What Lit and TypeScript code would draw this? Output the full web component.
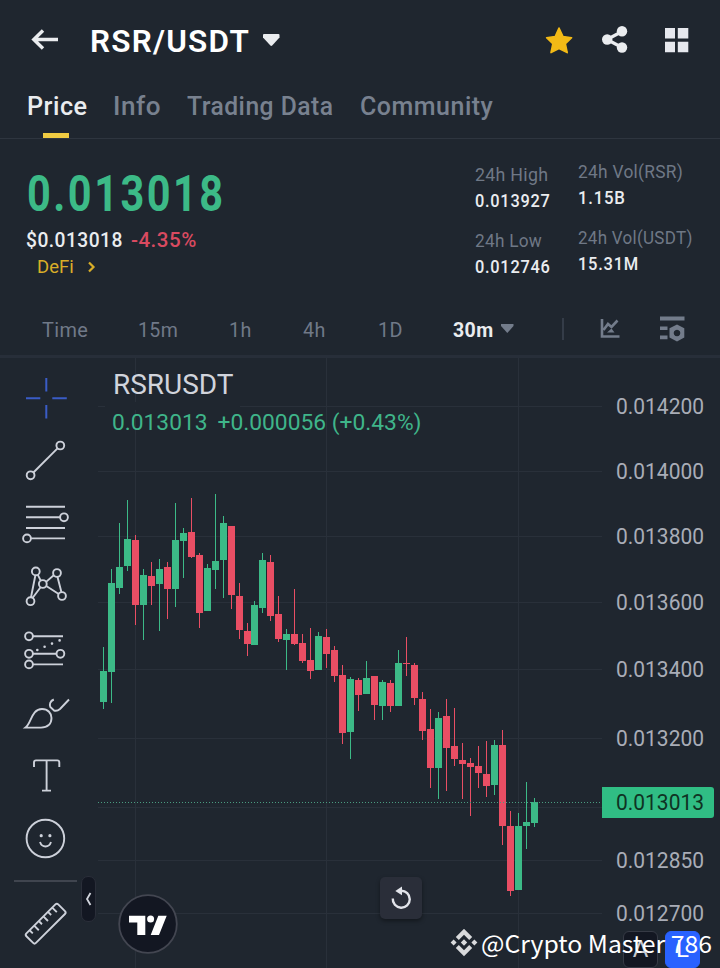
import { LitElement, html, svg, css } from "lit";
import { customElement, property, query } from "lit/decorators.js";

/** Single-line label whose glyphs are condensed or widened to fill a set width. */
@customElement("fit-text")
class FitText extends LitElement {
  @property() text = "";
  @property({ type: Number }) w = 0;
  @query(".t") span!: HTMLElement;

  static styles = css`
    :host { display: block; white-space: nowrap; }
    .t { display: inline-block; transform-origin: 0 50%; }
  `;

  updated() {
    this.style.width = this.w + "px";
    this.fit();
    document.fonts.ready.then(() => this.fit());
  }

  fit() {
    const natural = this.span.offsetWidth;
    if (natural) this.span.style.transform = `scaleX(${this.w / natural})`;
  }

  render() {
    return html`<span class="t">${this.text}</span>`;
  }
}

const fit = (text: string, w: number, cls = "") =>
  html`<fit-text class=${cls} .text=${text} .w=${w}></fit-text>`;

// [rising, body top, body bottom, wick top, wick bottom]
type Candle = [number, number, number, number, number];
const CANDLES: Candle[] = [
  [1, 671, 702, 647, 709], [1, 583, 672, 569, 703], [1, 567, 588, 523, 594],
  [1, 539, 566, 500, 571], [0, 540, 605, 535, 625], [1, 575, 605, 569, 640],
  [0, 576, 586, 562, 605], [1, 569, 584, 559, 631], [0, 567, 589, 562, 619],
  [1, 540, 589, 503, 607], [1, 533, 541, 528, 578], [0, 532, 557, 498, 558],
  [0, 555, 613, 553, 628], [1, 568, 611, 564, 611], [1, 561, 570, 494, 589],
  [1, 523, 560, 516, 598], [0, 526, 595, 526, 609], [0, 596, 630, 583, 639],
  [0, 631, 644, 623, 656], [1, 605, 645, 601, 645], [1, 560, 608, 553, 613],
  [0, 562, 616, 555, 621], [0, 614, 639, 596, 642], [1, 634, 640, 629, 670],
  [0, 634, 644, 589, 645], [0, 643, 661, 634, 663], [0, 660, 671, 628, 679],
  [1, 636, 670, 632, 670], [0, 637, 654, 629, 668], [0, 650, 676, 646, 682],
  [0, 675, 733, 665, 744], [1, 679, 732, 677, 759], [0, 680, 695, 678, 711],
  [1, 678, 694, 661, 694], [0, 676, 705, 676, 720], [1, 682, 706, 680, 720],
  [0, 683, 706, 680, 712], [1, 663, 706, 650, 706], [0, 663, 664, 637, 676],
  [0, 665, 698, 663, 705], [0, 699, 731, 692, 740], [0, 729, 768, 709, 788],
  [1, 718, 768, 712, 799], [0, 716, 748, 699, 791], [0, 746, 759, 708, 766],
  [0, 760, 764, 743, 799], [0, 763, 767, 758, 816], [0, 766, 773, 746, 788],
  [0, 774, 786, 741, 797], [1, 745, 785, 740, 795], [0, 745, 826, 730, 845],
  [0, 826, 891, 811, 896], [1, 826, 890, 813, 890], [1, 822, 826, 782, 849],
  [1, 802, 823, 798, 827],
];

const AXIS: [number, string][] = [
  [406, "0.014200"], [471, "0.014000"], [536, "0.013800"], [602, "0.013600"],
  [669, "0.013400"], [738, "0.013200"], [807, ""], [860, "0.012850"], [913, "0.012700"],
];

const ring = (x: number, y: number) => svg`<circle cx=${x} cy=${y} r="3.9"/>`;

const TOOLS = [
  svg`<path class="blue" d="M46.3 378v13.5M46.3 405v13.5M26 398.3h14.3M52.3 398.3h14.5"/>`,
  svg`${ring(60.3, 445.5)}${ring(30.6, 475.3)}<path d="M57.5 448.3L33.4 472.5"/>`,
  svg`${ring(64, 517.3)}${ring(27, 538.4)}<path d="M26 506.7h39M26 517.3h34M26 528h39M31 538.4h34"/>`,
  svg`${ring(35.8, 571.4)}${ring(57, 573)}${ring(42.8, 584)}${ring(62, 596)}${ring(30.5, 601.2)}
    <path d="M37.8 574.9L40.8 580.6M35.4 575.3L31 597.3M46.1 581.9L53.7 575.2M57.5 576.9L61.4 592.1M46.3 586L58.7 594M40.6 587.3L32.7 597.8"/>`,
  svg`${ring(29, 636.3)}${ring(29, 653.8)}${ring(60.4, 653.8)}${ring(29, 664.4)}
    <path d="M33 636.3h30M33 653.8h23.4M33 664.4h30"/>
    <path class="dots" d="M37.3 650h.01M44.6 646.8h.01M52 643.6h.01M59.6 640.4h.01"/>`,
  svg`<path d="M25.5 727.6C31.5 723 31.5 709 42 709C48 709 51.5 713.3 51.5 718C51.5 724 47.500 727.600 41 727.600Z"/>
    <path d="M53.800 699.500C50 701 49.300 704.500 50.300 707L54 710.500Q57 711.600 60 709L69 699.500"/>`,
  svg`<path d="M34 767V762.500Q34 760.400 36 760.400H57.300Q59.300 760.400 59.300 762.500V767M46.600 760.400V790.600M42 790.600H51"/>`,
  svg`<circle cx="45.400" cy="838.500" r="18.800"/><path d="M40 842Q41.500 846.500 45.500 846.500Q49.500 846.500 51 842"/>
    <path class="eyes" d="M41.200 835.700h.01M49.900 835.700h.01"/>`,
];

const UP = "#3cba87";
const DOWN = "#e94e64";

@customElement("app-root")
class AppRoot extends LitElement {
  static styles = css`
    :host {
      display: flex; flex-direction: column; width: 720px; height: 968px;
      overflow: hidden; background: #1f262f; color: #eaecef;
      font-family: Roboto, "Liberation Sans", sans-serif;
    }
    svg { display: block; flex: none; }
    header { display: flex; align-items: center; height: 80px; padding: 0 31px; box-sizing: border-box; }
    .pair { margin: 4px 12.500px 0 32px; font-size: 30.5px; font-weight: 600; line-height: 40px; letter-spacing: 1.200px; color: #fff; }
    .star { margin-left: auto; }
    .share { margin: 0 37px 0 28px; }
    nav { position: relative; display: flex; gap: 26px; height: 59px; padding: 0 26.5px; box-sizing: border-box;
      border-bottom: 1px solid #2e353f; font-size: 25px; font-weight: 500; line-height: 53px; letter-spacing: .500px; color: #78818f; }
    .on { color: #eaecef; }
    .bar { position: absolute; left: 43px; bottom: 0; width: 26px; height: 5px; background: #f0cb42; }
    .stats { display: flex; height: 166px; box-sizing: border-box; padding-left: 26px; }
    .left { width: 449px; padding-top: 25px; }
    .big { margin-left: .500px; font-size: 49.500px; font-weight: 700; line-height: 60px; letter-spacing: 3px; color: #3cba87; }
    .row { display: flex; gap: 8px; margin-top: 3px; font-size: 21px; line-height: 27px; font-weight: 500; letter-spacing: .500px; }
    .fall { color: #d94a60; }
    .tag { display: flex; align-items: center; gap: 14px; margin: -1px 0 0 11px; font-size: 19px; line-height: 28px; color: #d9ae28; }
    .col { width: 103px; padding-top: 23px; font-size: 18.500px; line-height: 26px; letter-spacing: .300px; }
    .col.vol { padding-top: 20px; }
    .k { color: #6f7886; }
    .v { font-weight: 500; font-size: 18px; letter-spacing: .800px; margin-bottom: 14px; }
    .times { display: grid; grid-template-columns: 96px 91px 74px 75px 75px 48px 62px 37px 60px 25px;
      align-items: center; height: 53px; box-sizing: border-box; padding: 0 0 3px 41.800px;
      border-bottom: 3px solid #272e39; font-size: 21px; line-height: 30px; letter-spacing: .400px; color: #707988; }
    .times fit-text { padding-top: 2px; }
    .cur { color: #eaecef; font-weight: 700; }
    .rule { width: 2px; height: 22px; margin-left: -1px; background: #343c48; }
    main { position: relative; display: flex; flex: 1; min-height: 0; }
    aside { width: 98px; padding-top: 9px; box-sizing: border-box; }
    .tool { fill: none; stroke: #cdd1da; stroke-width: 1.900; stroke-linecap: butt; }
    .blue { stroke: #3a5cc6; stroke-width: 2; }
    .dots { stroke-width: 2.600; stroke-linecap: round; }
    .eyes { stroke-width: 3.200; stroke-linecap: round; }
    .sep { width: 63px; height: 2px; margin: 9px 0 8px 14px; background: #40454f; }
    .axis { font-size: 22px; fill: #a9adb7; }
    .last { fill: #0f3323; }
    .name { font-size: 28px; fill: #d1d4dc; }
    .gain { font-size: 22px; fill: #3fb58a; }
    .handle { position: absolute; left: 81px; top: 518px; width: 15px; height: 46px; box-sizing: border-box;
      border: 1px solid #2a2e39; border-radius: 7px; background: #131722; display: grid; place-items: center; }
    .tv { position: absolute; left: 118px; top: 536px; }
    .reset { position: absolute; left: 380px; top: 519px; width: 42px; height: 42px; border-radius: 5px;
      background: #2a2e39; box-shadow: 0 2px 4px #0006; }
    .modes { position: absolute; left: 623px; top: 573px; display: flex; gap: 7px; }
    .mode { width: 35px; height: 37px; box-sizing: border-box; border: 1px solid #363a45; border-radius: 6px;
      background: #131722; color: #c5c8d0; text-align: center; font-size: 24px; line-height: 34px; }
    .mode.log { background: #2962ff; border-color: #2962ff; color: #fff; }
    .mark { position: absolute; left: 450px; top: 567px; display: flex; align-items: center; gap: 3px; color: #fff;
      font: 24px/36px "Noto Sans CJK SC", sans-serif; }
  `;

  candle([up, top, bottom, high, low]: Candle, i: number) {
    const x = 103 + i * 8 - (i > 18 ? 1 : 0);
    const color = up ? UP : DOWN;
    return svg`<rect x=${x} y=${high} width="1" height=${low - high} fill=${color}/>
      <rect x=${x - 3} y=${top} width="7" height=${bottom - top} fill=${color}/>`;
  }

  chart() {
    return html`<svg width="622" height="610" viewBox="98 358 622 610">
      ${AXIS.map(([y, label]) => svg`<rect x="98" y=${y} width="504" height="1" fill="#29303a"/>
        ${label ? svg`<text class="axis" x="616" y=${y + 8} textLength="88" lengthAdjust="spacingAndGlyphs">${label}</text>` : ""}`)}
      ${[135, 326, 518].map((x) => svg`<rect x=${x} y="358" width="1" height="610" fill="#29303a"/>`)}
      <rect x="105" y="402" width="135" height="8" fill="#1f262f"/>
      ${CANDLES.map((c, i) => this.candle(c, i))}
      <path d="M98 802.5H602" stroke="#4a9c80" stroke-width="1" stroke-dasharray="1 2"/>
      <path d="M602 787H711Q714 787 714 790V815Q714 818 711 818H602Z" fill="#30bd84"/>
      <text class="axis last" x="616" y="810" textLength="88" lengthAdjust="spacingAndGlyphs">0.013013</text>
      <text class="name" x="113" y="394" textLength="120.500" lengthAdjust="spacingAndGlyphs">RSRUSDT</text>
      <text class="gain" x="112" y="430" textLength="95.500" lengthAdjust="spacingAndGlyphs">0.013013</text>
      <text class="gain" x="217.500" y="430" textLength="204" lengthAdjust="spacingAndGlyphs">+0.000056 (+0.43%)</text>
    </svg>`;
  }

  render() {
    return html`
      <header>
        <svg width="27" height="24" viewBox="31 28 27 24" fill="none" stroke="#eaecef" stroke-width="3.400">
          <path d="M43 30.500L33.800 39.500L43 48.500M33.500 39.500H58"/>
        </svg>
        ${fit("RSR/USDT", 160, "pair")}
        <svg width="17" height="12" viewBox="0 0 17 12"><path d="M1 0H15.500Q16.500 0 16.500 1V3.500L9.200 11.600Q8.300 12.400 7.400 11.600L0 3.500V1Q0 0 1 0Z" fill="#eaecef"/></svg>
        <svg class="star" width="28" height="28" viewBox="545 26 28 28">
          <path d="M559 28L563 36.500L571.600 37.700L565.400 43.800L567.200 52.600L559 48.500L551 52.600L552.800 43.800L546.600 37.700L555.200 36.500Z" fill="#f3ba16" stroke="#f3ba16" stroke-width="1.600" stroke-linejoin="round"/>
        </svg>
        <svg class="share" width="27" height="28" viewBox="601 26 27 28" fill="#eaecef">
          <path d="M622 31.500L607 39.500L622 47.500" fill="none" stroke="#eaecef" stroke-width="3.200"/>
          <circle cx="607.200" cy="39.500" r="5.200"/><circle cx="622" cy="31.300" r="5.200"/><circle cx="622" cy="47.500" r="5.200"/>
        </svg>
        <svg width="24" height="25" viewBox="0.500 0 24 25" fill="#e6e8ee"><path d="M0 0H10.500V10.500H0zM13.300 0H23.800V10.500H13.300zM0 13.800H10.500V24.300H0zM13.300 13.800H23.800V24.300H13.300z"/></svg>
      </header>
      <nav>
        ${fit("Price", 60.5, "on")}${fit("Info", 48)}${fit("Trading Data", 147)}${fit("Community", 133)}
        <div class="bar"></div>
      </nav>
      <section class="stats">
        <div class="left">
          ${fit("0.013018", 198.5, "big")}
          <div class="row">${fit("$0.013018", 97)}${fit("-4.35%", 65.5, "fall")}</div>
          <div class="tag">${fit("DeFi", 37)}
            <svg width="8" height="12" viewBox="0.500 0 8 12" fill="none" stroke="#d9ae28" stroke-width="2.200"><path d="M1.500 1.500L6 6L1.500 10.500"/></svg>
          </div>
        </div>
        <div class="col">
          ${fit("24h High", 73, "k")}${fit("0.013927", 75.5, "v")}${fit("24h Low", 67, "k")}${fit("0.012746", 75.5, "v")}
        </div>
        <div class="col vol">
          ${fit("24h Vol(RSR)", 105, "k")}${fit("1.15B", 47.5, "v")}${fit("24h Vol(USDT)", 115, "k")}${fit("15.31M", 60.5, "v")}
        </div>
      </section>
      <section class="times">
        ${fit("Time", 46.5)}${fit("15m", 40)}${fit("1h", 22.5)}${fit("4h", 22.5)}${fit("1D", 24.5)}${fit("30m", 41, "cur")}
        <svg width="13" height="10" viewBox="0 0 13 10"><path d="M0 0H12.500V2L6.300 9L0 2Z" fill="#737c8b"/></svg>
        <div class="rule"></div>
        <svg width="20" height="20" viewBox="0 0 20 20" fill="none" stroke="#737c8b" stroke-width="2.600">
          <path d="M2 0V17.500H19.500M3.500 11L8 5L11.500 8L17.500 1.500"/><path d="M7 13.500L11.500 9.500L14.500 13.500Z" fill="#737c8b" stroke="none"/>
        </svg>
        <svg width="25" height="26" viewBox="0 0 25 26" fill="#737c8b">
          <path d="M0 .500H24.500V4.500H0zM0 10.500H7.500V14H0zM0 19.500H7.500V23.300H0z"/>
          <path fill-rule="evenodd" d="M17 8.500L24.300 12.200V21.500L17 25.500L9.500 21.500V12.200ZM17 13.700a3.300 3.300 0 1 0 .01 0Z"/>
        </svg>
      </section>
      <main>
        <aside>
          ${TOOLS.map((icon, i) => html`<svg class="tool" width="98" height="63" viewBox=${`0 ${367 + 63 * i} 98 63`}>${icon}</svg>`)}
          <div class="sep"></div>
          <svg class="tool" width="98" height="66" viewBox="0 890 98 66">
            <g transform="translate(45.500 923.500) rotate(-45)">
              <rect x="-22.500" y="-6.500" width="45" height="13.500" rx="2"/>
              <path d="M-16 -6.500v4.500M-9.500 -6.500v6.500M-3 -6.500v4.500M3.500 -6.500v6.500M10 -6.500v4.500M16 -6.500v6.500"/>
            </g>
          </svg>
        </aside>
        ${this.chart()}
        <div class="handle"><svg width="7" height="14" viewBox="0 0 7 14" fill="none" stroke="#d1d4dc" stroke-width="1.800"><path d="M5.500 1L2 7L5.500 13"/></svg></div>
        <svg class="tv" width="60" height="60" viewBox="118 894 60 60">
          <circle cx="148" cy="924" r="28.800" fill="#131722" stroke="#434651" stroke-width="1.800"/>
          <path d="M129 915.700H145.300V935H137.300V922.400H129ZM158.300 915.700H166.700L159 935H150.700Z" fill="#fff"/>
          <circle cx="150.600" cy="918.900" r="3.500" fill="#fff"/>
        </svg>
        <div class="reset"><svg width="42" height="42" viewBox="380 877 42 42">
          <path d="M392.800 898.500A8.500 8.500 0 1 0 401 890.700" fill="none" stroke="#e2e4ea" stroke-width="2.400"/>
          <path d="M395.300 891L402 886.500V895.200Z" fill="#e2e4ea"/>
        </svg></div>
        <div class="modes"><div class="mode">A</div><div class="mode log">L</div></div>
        <div class="mark">
          <svg width="28" height="28" viewBox="-14 -13.500 28 28" fill="#d9dadc">
            <path d="M0 -13.700L8.200 -5.500L5.200 -2.600L0 -7.800L-5.200 -2.600L-8.200 -5.500ZM0 13.700L8.200 5.500L5.200 2.600L0 7.800L-5.200 2.600L-8.200 5.500ZM-10.400 -3L-7.400 0L-10.400 3L-13.400 0ZM10.400 -3L13.400 0L10.400 3L7.400 0ZM0 -3.200L3.200 0L0 3.200L-3.200 0Z"/>
          </svg>
          ${fit("@Crypto Master 786", 231)}
        </div>
      </main>
    `;
  }
}
